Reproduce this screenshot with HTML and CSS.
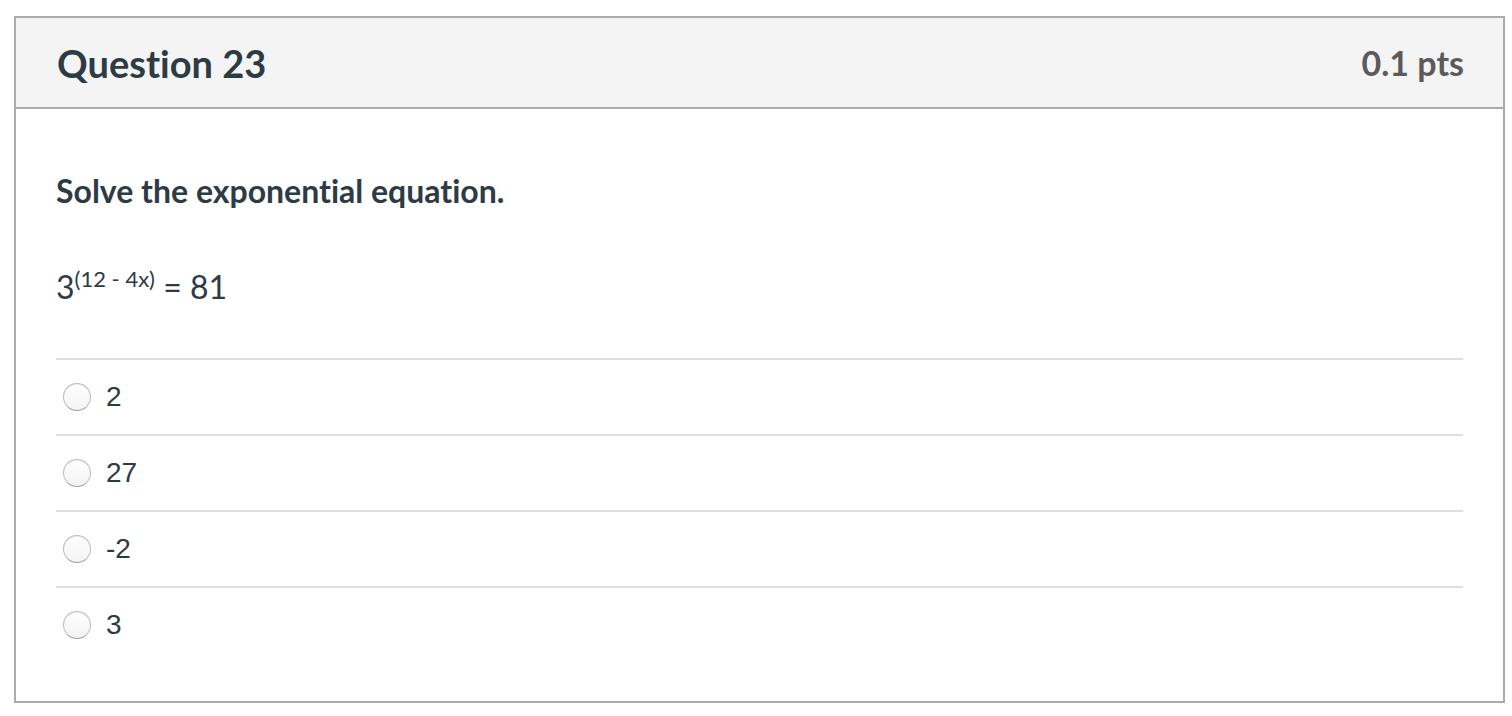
FILE: index.html
```html
<!DOCTYPE html>
<html lang="en">
<head>
<meta charset="utf-8">
<title>Question 23</title>
<link rel="stylesheet" href="styles.css">
</head>
<body>
<div class="question">
  <div class="header">
    <h2 class="title">Question 23</h2>
    <div class="points">0.1 pts</div>
  </div>
  <div class="content">
    <p class="prompt">Solve the exponential equation.</p>
    <p class="equation">3<sup class="exp">(12 - 4x)</sup> = 81</p>
    <div class="answers">
      <label class="answer"><span class="radio"></span><span class="answer-text">2</span></label>
      <label class="answer"><span class="radio"></span><span class="answer-text">27</span></label>
      <label class="answer"><span class="radio"></span><span class="answer-text">-2</span></label>
      <label class="answer"><span class="radio"></span><span class="answer-text">3</span></label>
    </div>
  </div>
</div>
</body>
</html>
```
FILE: styles.css
```css
html, body {
  margin: 0;
  padding: 0;
  background: #ffffff;
}

body {
  font-family: Lato, "Liberation Sans", sans-serif;
  color: #2d3b45;
  font-variant-ligatures: none;
  font-feature-settings: "liga" 0, "clig" 0;
}

.question {
  margin: 16px 7px 0 14px;
  border: 2px solid #ababab;
  background: #ffffff;
}

.header {
  height: 89px;
  display: flex;
  align-items: center;
  justify-content: space-between;
  padding: 0 39px 0 41px;
  background: #f4f4f4;
  border-bottom: 2px solid #ababab;
}

.title {
  margin: 0;
  font-size: 38px;
  font-weight: 700;
  color: #2d3b45;
}

.points {
  font-size: 34px;
  font-weight: 700;
  color: #5b5b5b;
}

.content {
  padding: 0 40px 39px 40px;
}

.prompt {
  margin: 61px 0 0 0;
  font-size: 32px;
  line-height: 42px;
  font-weight: 700;
}

.equation {
  margin: 54px 0 0 0;
  font-size: 32px;
  line-height: 42px;
}

.exp {
  font-size: 22px;
  vertical-align: 12px;
  line-height: 0;
}

.answers {
  margin-top: 50px;
}

.answer {
  display: flex;
  align-items: center;
  height: 74px;
  border-top: 2px solid #dedede;
}

.radio {
  width: 26px;
  height: 26px;
  margin-left: 7px;
  margin-right: 15px;
  border-radius: 50%;
  border: 1px solid #bdbdbd;
  border-bottom-color: #9c9c9c;
  background: linear-gradient(#ffffff, #f3f3f3);
  box-shadow: inset 0 1px 1px rgba(0, 0, 0, 0.06);
  flex: none;
}

.answer-text {
  font-family: "Liberation Sans", Arial, sans-serif;
  font-size: 28px;
  color: #2d3b45;
}
```
